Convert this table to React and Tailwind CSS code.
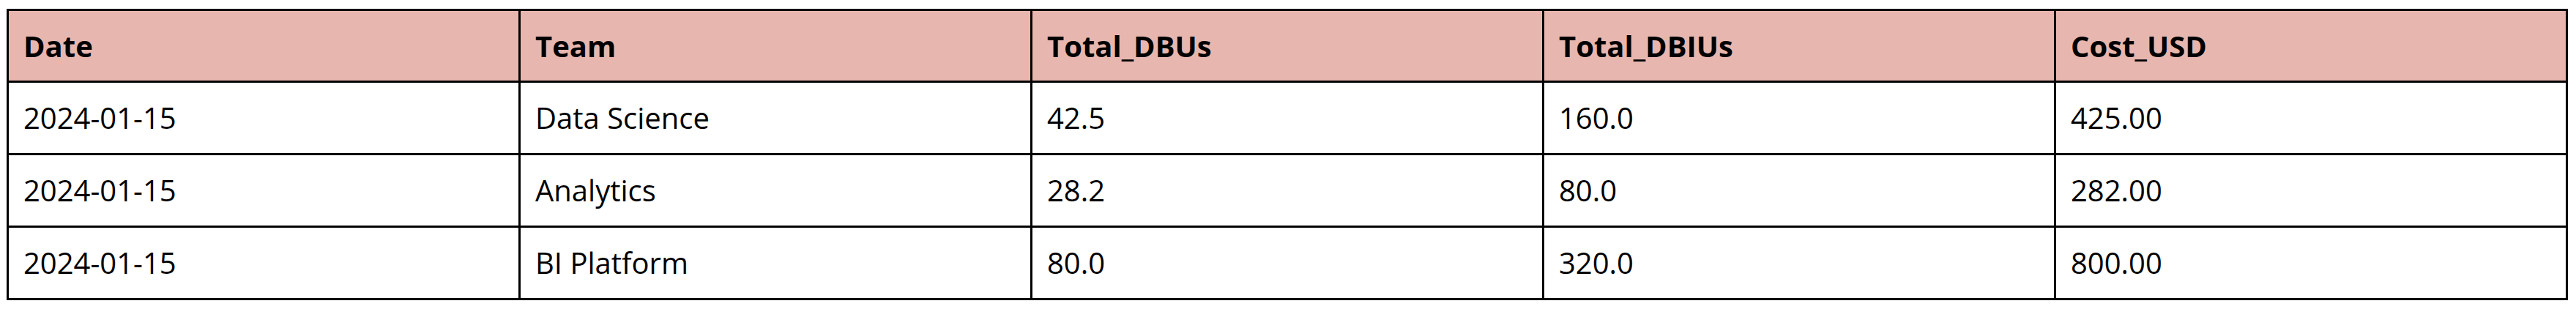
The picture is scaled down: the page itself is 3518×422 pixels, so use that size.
import React from "react";

const headers = ["Date", "Team", "Total_DBUs", "Total_DBIUs", "Cost_USD"];
const rows = [
  ["2024-01-15", "Data Science", "42.5", "160.0", "425.00"],
  ["2024-01-15", "Analytics", "28.2", "80.0", "282.00"],
  ["2024-01-15", "BI Platform", "80.0", "320.0", "800.00"],
];

export default function App() {
  return (
    <div className="w-[3518px] h-[422px] bg-white pl-[9px] pt-[12px] font-['Open_Sans','Liberation_Sans',sans-serif] text-black">
      <div
        role="table"
        className="grid w-[3498px] grid-cols-[repeat(5,696px)] grid-rows-[95px_96px_96px_96px] gap-[3px] bg-black p-[3px]"
      >
        {headers.map((h) => (
          <div
            key={h}
            role="columnheader"
            className="flex items-center bg-[#e7b7af] px-[20px] text-[40px] font-bold leading-none"
          >
            {h}
          </div>
        ))}
        {rows.map((r, i) =>
          r.map((c, j) => (
            <div
              key={i + "-" + j}
              role="cell"
              className="flex items-center bg-white px-[20px] text-[40px] leading-none"
            >
              {c}
            </div>
          ))
        )}
      </div>
    </div>
  );
}
